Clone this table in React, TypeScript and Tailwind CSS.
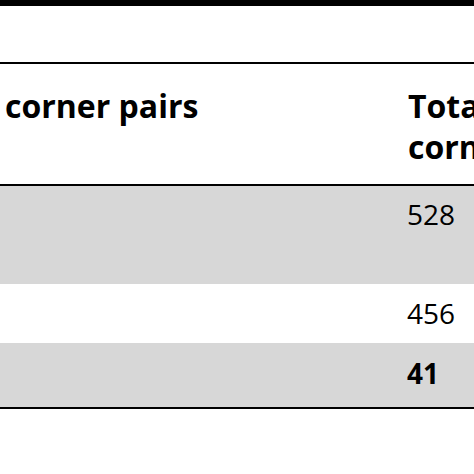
export default function App() {
  const font = { fontFamily: '"Open Sans", "Segoe UI", sans-serif' };
  return (
    <div className="w-[474px] h-[474px] overflow-hidden bg-white text-black" style={font}>
      <div className="h-[6px] bg-black" />
      <div className="h-[56px]" />
      <div className="h-[2px] bg-black" />
      <div className="flex h-[120px] pt-[21px] font-bold text-[32px] leading-[41px]">
        <div className="w-[408px] pl-[5px] whitespace-nowrap">corner pairs</div>
        <div className="flex-1 min-w-0 whitespace-nowrap overflow-hidden">
          <div>Total</div>
          <div>corner pairs</div>
        </div>
      </div>
      <div className="h-[2px] bg-black" />
      <div className="flex h-[98px] bg-[#d7d7d7] text-[28px] leading-[40px] pt-[8px]">
        <div className="w-[407px]" />
        <div>528</div>
      </div>
      <div className="flex h-[59px] bg-white text-[28px] leading-[40px] pt-[9px]">
        <div className="w-[407px]" />
        <div>456</div>
      </div>
      <div className="flex h-[64px] bg-[#d7d7d7] text-[28px] leading-[40px] pt-[10px] font-bold">
        <div className="w-[407px]" />
        <div>41</div>
      </div>
      <div className="h-[2px] bg-black" />
    </div>
  );
}
